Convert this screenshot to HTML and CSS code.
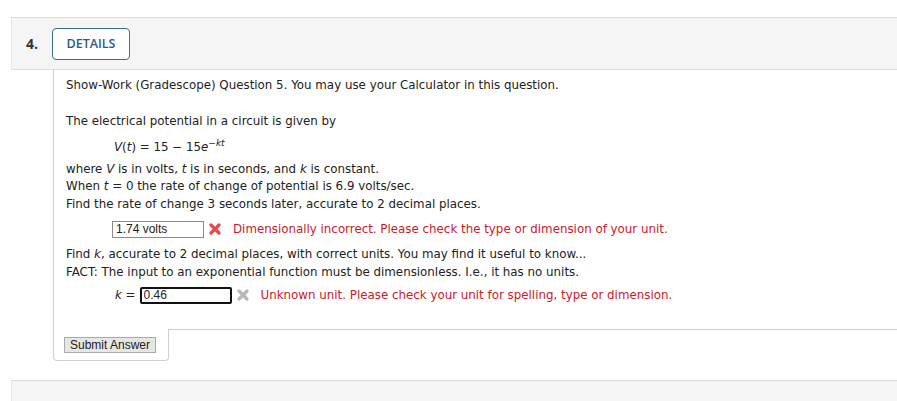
FILE: index.html
```html
<!DOCTYPE html>
<html>
<head>
<meta charset="utf-8">
<link rel="stylesheet" href="styles.css">
</head>
<body>
<div class="page">
  <div class="question">
    <div class="qhead">
      <span class="qnum">4.</span>
      <button class="details">DETAILS</button>
    </div>
    <div class="qbody">
      <p class="line intro">Show-Work (Gradescope) Question 5. You may use your Calculator in this question.</p>
      <p class="line gap">The electrical potential in a circuit is given by</p>
      <div class="math"><i>V</i>(<i>t</i>) = 15 &minus; 15<i>e</i><span class="sup">&minus;<i>kt</i></span></div>
      <p class="line">where <i>V</i> is in volts, <i>t</i> is in seconds, and <i>k</i> is constant.</p>
      <p class="line">When <i>t</i> = 0 the rate of change of potential is 6.9 volts/sec.</p>
      <p class="line">Find the rate of change 3 seconds later, accurate to 2 decimal places.</p>
      <div class="answer a1">
        <input class="inp" type="text" value="1.74 volts">
        <svg class="xicon" width="12" height="12" viewBox="0 0 12 12"><path d="M2 2 L10 10 M10 2 L2 10" stroke="#e5484d" stroke-width="3.2" stroke-linecap="round"/></svg>
        <span class="err">Dimensionally incorrect. Please check the type or dimension of your unit.</span>
      </div>
      <p class="line">Find <i>k</i>, accurate to 2 decimal places, with correct units. You may find it useful to know...</p>
      <p class="line">FACT: The input to an exponential function must be dimensionless. I.e., it has no units.</p>
      <div class="answer a2">
        <span class="klabel"><i>k</i> = </span>
        <input class="inp focus" type="text" value="0.46">
        <svg class="xicon" width="12" height="12" viewBox="0 0 12 12"><path d="M2 2 L10 10 M10 2 L2 10" stroke="#b8b8b8" stroke-width="3.2" stroke-linecap="round"/></svg>
        <span class="err">Unknown unit. Please check your unit for spelling, type or dimension.</span>
      </div>
    </div>
    <div class="submit-row">
      <div class="submit-tab"><button class="submit">Submit Answer</button></div>
      <div class="filler"></div>
    </div>
  </div>
  <div class="question next">
    <div class="qhead"></div>
  </div>
</div>
</body>
</html>
```
FILE: styles.css
```css
html, body { margin: 0; padding: 0; background: #fff; }
.page { padding: 17px 0 0 11px; overflow: hidden; height: 384px; }
.qhead {
  height: 51px;
  background: #f5f5f5;
  border-top: 1px solid #dcdcdc;
  border-bottom: 1px solid #dcdcdc;
  border-left: 1px solid #e6e6e6;
  display: flex;
  align-items: center;
  padding-left: 14px;
  box-sizing: content-box;
}
.qnum {
  font-family: "Open Sans", sans-serif;
  font-weight: 700;
  font-size: 14px;
  color: #333;
  width: 26px;
}
.details {
  width: 78px;
  height: 32px;
  background: #fff;
  border: 1px solid #3e6e90;
  border-radius: 4px;
  color: #2d5b86;
  font-family: "Open Sans", sans-serif;
  font-weight: 600;
  font-size: 12.5px;
  padding: 0;
  margin: 0;
}
.qbody {
  margin-left: 42px;
  border-left: 1px solid #cfcfcf;
  padding: 7px 0 8px 12px;
  font-family: "DejaVu Sans", Verdana, sans-serif;
  font-size: 11.85px;
  color: #222;
}
.line { margin: 0; line-height: 17.5px; height: 17.5px; white-space: nowrap; }
.gap { margin-top: 18px; }
.math { margin: 9px 0 4px 48px; line-height: 17.5px; height: 17.5px; white-space: nowrap; }
.math .sup { font-size: 9px; position: relative; top: -5px; }
.answer { display: flex; align-items: center; height: 18px; white-space: nowrap; }
.a1 { margin: 7px 0 8px 46px; }
.a2 { margin: 5px 0 17px 49px; }
.inp {
  width: 92px;
  height: 17px;
  box-sizing: border-box;
  border: 1px solid #8a8a8a;
  padding: 0 3px;
  font-family: "Liberation Sans", Arial, sans-serif;
  font-size: 12px;
  color: #222;
  margin: 0;
  outline: none;
}
.inp.focus { border: 2px solid #111; border-radius: 2px; width: 92px; height: 17px; padding: 0 2px; }
.xicon { margin: 0 12px 0 5px; display: block; }
.a1 .xicon { margin-left: 5px; }
.err { color: #c7202b; }
.klabel { margin-right: 4px; }
.submit-row { display: flex; align-items: flex-start; margin-left: 42px; }
.submit-tab {
  width: 116px;
  height: 32px;
  border: 1px solid #cfcfcf;
  border-top: none;
  border-radius: 0 0 4px 4px;
  padding: 8px 0 0 10px;
  box-sizing: border-box;
}
.filler { flex: 1; border-top: 1px solid #cfcfcf; margin-left: -1px; }
.submit {
  display: block;
  font-family: "Liberation Sans", Arial, sans-serif;
  font-size: 12px;
  height: 16px;
  width: 92px;
  padding: 0;
  background: #e6e6e6;
  border: 1px solid #aaa;
  color: #222;
  border-radius: 0;
}
.next { margin-top: 19px; }
.next .qhead { border-bottom: none; }
```
